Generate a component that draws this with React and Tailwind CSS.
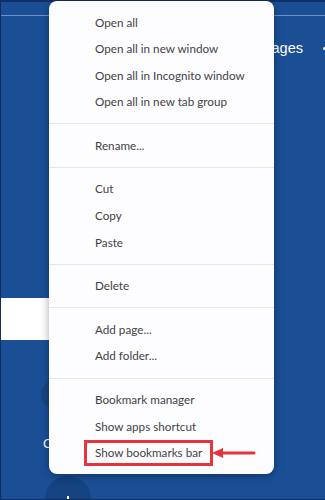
import React from 'react';

const sections = [
  ['Open all', 'Open all in new window', 'Open all in Incognito window', 'Open all in new tab group'],
  ['Rename...'],
  ['Cut', 'Copy', 'Paste'],
  ['Delete'],
  ['Add page...', 'Add folder...'],
  ['Bookmark manager', 'Show apps shortcut', 'Show bookmarks bar'],
];

const MenuItem = ({ label }) => {
  const highlighted = label === 'Show bookmarks bar';
  return (
    <div className="h-[26.6px] flex items-center pl-[46px]">
      {highlighted ? (
        <span className="relative border-[3px] border-[#e3353b] px-[8px] -ml-[11px] h-[26px] flex items-center">
          {label}
          {/* red pointer arrow */}
          <svg className="absolute left-full top-[3px] ml-[1px]" width="46" height="14" viewBox="0 0 46 14">
            <path d="M1 7 L12 2 L12 12 Z" fill="#e3353b" />
            <line x1="11" y1="7" x2="43" y2="7" stroke="#e3353b" strokeWidth="3" strokeLinecap="round" />
          </svg>
        </span>
      ) : (
        <span>{label}</span>
      )}
    </div>
  );
};

const App = () => {
  return (
    <div className="w-[325px] h-[500px] relative overflow-hidden bg-[#1a4f96] border-l border-b border-[#0e2e62] font-['Lato',sans-serif]">
      {/* page behind the menu */}
      <div className="h-[2px] bg-[#0f2f66]"></div>
      <div className="h-[13px]"></div>
      <div className="h-px bg-[#6a93c9]"></div>
      <div className="flex justify-end items-center gap-[20px] pt-[22px]">
        <span className="text-white text-[14.5px] font-['Liberation_Sans',sans-serif]">Images</span>
        <div className="w-[3px] h-[3px] rounded-full bg-white -mr-[1px]"></div>
      </div>
      <div className="absolute left-0 top-[298px] w-[60px] h-[42px] bg-white"></div>
      <div className="absolute left-[40px] top-[380px] w-[30px] h-[30px] rounded-full bg-[#174583]"></div>
      <span className="absolute left-[42px] top-[434px] text-white text-[13px] font-['Liberation_Sans',sans-serif]">C</span>
      <div className="absolute left-[44px] top-[476px] w-[46px] h-[46px] rounded-full bg-[#154280] flex justify-center">
        <div className="w-[2px] h-[4px] bg-white mt-[20px]"></div>
      </div>

      {/* context menu */}
      <div className="absolute left-[48px] top-[1px] w-[225px] rounded-[8px] bg-[#fdfcfe] py-[8px] shadow-[0_2px_8px_rgba(0,0,0,0.35)] text-[11.7px] text-[#434347]">
        {sections.map((items, i) => (
          <div key={i}>
            {i > 0 && <div className="my-[8px] h-px bg-[#e4e6ee]"></div>}
            {items.map((label) => (
              <MenuItem key={label} label={label} />
            ))}
          </div>
        ))}
      </div>
    </div>
  );
};

export default App;
